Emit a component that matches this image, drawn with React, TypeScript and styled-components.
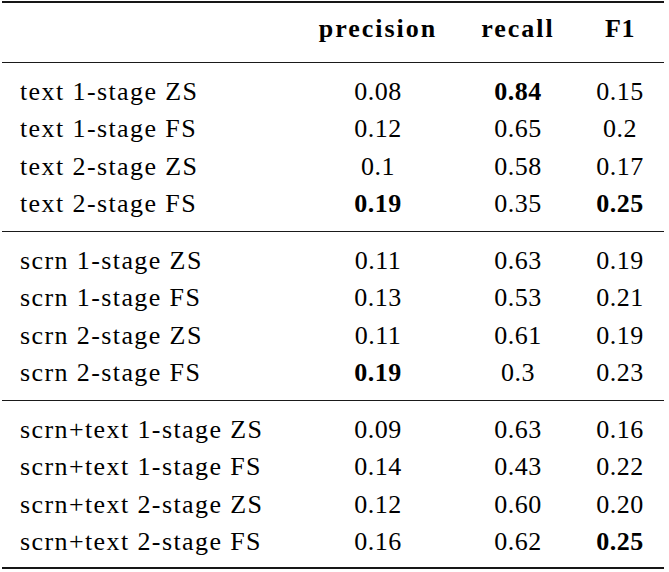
import React from "react";
import styled, { createGlobalStyle } from "styled-components";

const GlobalStyle = createGlobalStyle`
  html, body {
    margin: 0;
    padding: 0;
    background: #ffffff;
  }
`;

const Table = styled.div`
  width: 662px;
  margin: 1px 0 0 2px;
  border-top: 2px solid #161616;
  border-bottom: 2px solid #161616;
`;

const Header = styled.div`
  padding: 7px 0 14px;
`;

const Group = styled.div<{ $last?: boolean }>`
  border-top: 1px solid #1a1a1a;
  padding: 10px 0 ${(p) => (p.$last ? "6px" : "8px")};
`;

const Row = styled.div`
  display: grid;
  grid-template-columns: 294px 164px 116px 88px;
  height: 37.5px;
  align-items: start;
`;

const Label = styled.div`
  font-family: "Liberation Serif", serif;
  font-size: 26px;
  line-height: 37.5px;
  padding-left: 18px;
  letter-spacing: 1.4px;
  white-space: nowrap;
`;

const Value = styled.div<{ $bold?: boolean }>`
  font-family: "Liberation Serif", serif;
  font-size: 26px;
  line-height: 37.5px;
  text-align: center;
  font-weight: ${(p) => (p.$bold ? 700 : 400)};
  letter-spacing: 0.5px;
  white-space: nowrap;
`;

const HeadCell = styled.div<{ $ls: number }>`
  font-family: "Liberation Serif", serif;
  font-size: 26px;
  line-height: 37.5px;
  text-align: center;
  font-weight: 700;
  letter-spacing: ${(p) => p.$ls}px;
  white-space: nowrap;
`;

type Cell = { v: string; b?: boolean };
type DataRow = { label: string; cells: Cell[] };

const groups: DataRow[][] = [
  [
    { label: "text 1-stage ZS", cells: [{ v: "0.08" }, { v: "0.84", b: true }, { v: "0.15" }] },
    { label: "text 1-stage FS", cells: [{ v: "0.12" }, { v: "0.65" }, { v: "0.2" }] },
    { label: "text 2-stage ZS", cells: [{ v: "0.1" }, { v: "0.58" }, { v: "0.17" }] },
    { label: "text 2-stage FS", cells: [{ v: "0.19", b: true }, { v: "0.35" }, { v: "0.25", b: true }] },
  ],
  [
    { label: "scrn 1-stage ZS", cells: [{ v: "0.11" }, { v: "0.63" }, { v: "0.19" }] },
    { label: "scrn 1-stage FS", cells: [{ v: "0.13" }, { v: "0.53" }, { v: "0.21" }] },
    { label: "scrn 2-stage ZS", cells: [{ v: "0.11" }, { v: "0.61" }, { v: "0.19" }] },
    { label: "scrn 2-stage FS", cells: [{ v: "0.19", b: true }, { v: "0.3" }, { v: "0.23" }] },
  ],
  [
    { label: "scrn+text 1-stage ZS", cells: [{ v: "0.09" }, { v: "0.63" }, { v: "0.16" }] },
    { label: "scrn+text 1-stage FS", cells: [{ v: "0.14" }, { v: "0.43" }, { v: "0.22" }] },
    { label: "scrn+text 2-stage ZS", cells: [{ v: "0.12" }, { v: "0.60" }, { v: "0.20" }] },
    { label: "scrn+text 2-stage FS", cells: [{ v: "0.16" }, { v: "0.62" }, { v: "0.25", b: true }] },
  ],
];

export default function App() {
  return (
    <>
      <GlobalStyle />
      <Table>
        <Header>
          <Row>
            <Label />
            <HeadCell $ls={2}>precision</HeadCell>
            <HeadCell $ls={2}>recall</HeadCell>
            <HeadCell $ls={0.5}>F1</HeadCell>
          </Row>
        </Header>
        {groups.map((g, gi) => (
          <Group key={gi} $last={gi === groups.length - 1}>
            {g.map((r) => (
              <Row key={r.label}>
                <Label>{r.label}</Label>
                {r.cells.map((c, ci) => (
                  <Value key={ci} $bold={c.b}>
                    {c.v}
                  </Value>
                ))}
              </Row>
            ))}
          </Group>
        ))}
      </Table>
    </>
  );
}
